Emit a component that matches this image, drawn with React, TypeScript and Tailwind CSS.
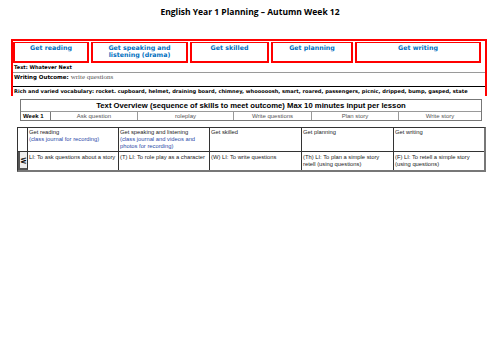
const skills = [
  { label: "Get reading", w: "w-[76px]" },
  { label: "Get speaking and listening (drama)", w: "w-[97px]" },
  { label: "Get skilled", w: "w-[79px]" },
  { label: "Get planning", w: "w-[82px]" },
  { label: "Get writing", w: "w-[126px]" },
];

const overview = [
  { text: "Ask question", w: "w-[87px]" },
  { text: "roleplay", w: "w-[96px]" },
  { text: "Write questions", w: "w-[78px]" },
  { text: "Plan story", w: "w-[87px]" },
  { text: "Write story", w: "flex-1" },
];

const plan = [
  { head: "Get reading", note: "(class journal for recording)", li: "LI: To ask questions about a story" },
  { head: "Get speaking and listening", note: "(class journal and videos and photos for recording)", li: "(T) LI: To role play as a character" },
  { head: "Get skilled", note: "", li: "(W) LI: To write questions" },
  { head: "Get planning", note: "", li: "(Th) LI: To plan a simple story retell (using questions)" },
  { head: "Get writing", note: "", li: "(F) LI: To retell a simple story (using questions)" },
];

export default function App() {
  return (
    <div className="w-[500px] h-[353px] bg-white overflow-hidden">
      {/* title */}
      <div className="pt-[7px] h-[39px]">
        <h1 className="text-center text-[8.5px] leading-[10px] font-bold text-black font-['Open_Sans',sans-serif]">
          English Year 1 Planning – Autumn Week 12
        </h1>
      </div>

      {/* skills header + text block */}
      <div className="ml-[11px] w-[476px] border-x-2 border-t-2 border-[#ff0000]">
        <div className="flex gap-[2px] pr-[4px] pt-[1px]">
          {skills.map((s) => (
            <div
              key={s.label}
              className={`${s.w} h-[21px] border-2 border-t border-[#ff0000] pt-[1px] px-[6px] text-center text-[6.3px] leading-[7px] font-bold text-[#0070c0] font-['DejaVu_Sans',sans-serif]`}
            >
              {s.label}
            </div>
          ))}
        </div>
        <div className="font-['DejaVu_Sans',sans-serif] text-black">
          <div className="h-[10px] border-b border-[#9a9a9a] px-[1px] text-[5px] leading-[9px] font-bold">
            Text: Whatever Next
          </div>
          <div className="h-[14px] border-b border-black px-[1px] text-[5.5px] leading-[9px]">
            <span className="font-bold">Writing Outcome: </span>
            <span className="text-[7px] text-[#555] font-['Liberation_Serif',serif]">write questions</span>
          </div>
          <div className="h-[9px] px-[1px] text-[5.1px] leading-[8px] font-bold whitespace-nowrap overflow-hidden">
            Rich and varied vocabulary: rocket. cupboard, helmet, draining board, chimney, whooooosh, smart, roared, passengers, picnic, dripped, bump, gasped, state
          </div>
        </div>
      </div>

      {/* overview */}
      <div className="ml-[20px] mt-[3px] w-[462px] border border-[#777] font-['Liberation_Sans',sans-serif]">
        <div className="h-[12px] border-b border-[#999] text-center text-[7.7px] leading-[12px] font-bold text-black">
          Text Overview (sequence of skills to meet outcome) Max 10 minutes input per lesson
        </div>
        <div className="flex h-[8px] text-[6px] leading-[8px] text-[#555]">
          <div className="w-[30px] border-r border-[#777] pl-[2px] font-bold text-black">Week 1</div>
          {overview.map((o, i) => (
            <div
              key={o.text}
              className={`${o.w} text-center ${i < overview.length - 1 ? "border-r border-[#999]" : ""}`}
            >
              {o.text}
            </div>
          ))}
        </div>
      </div>

      {/* plan table */}
      <div className="ml-[17px] mt-[6px] w-[469px] border-t border-l border-[#333] border-r-2 border-b-2 border-r-[#777] border-b-[#777] font-['Liberation_Sans',sans-serif] text-[5.8px] leading-[7px] text-[#222]">
        <div className="grid grid-cols-[10px_91px_91px_92px_92px_90px] h-[24px] border-b border-[#333]">
          <div className="border-r border-[#333]" />
          {plan.map((p, i) => (
            <div key={p.head} className={`px-[1px] pt-[1px] ${i < plan.length - 1 ? "border-r border-[#333]" : ""}`}>
              <div>{p.head}</div>
              {p.note && <div className="text-[#2b4aa8]">{p.note}</div>}
            </div>
          ))}
        </div>
        <div className="grid grid-cols-[10px_91px_91px_92px_92px_90px] h-[18px]">
          <div className="border-r border-[#333] bg-[#eee] border-l-2 border-b-2 border-l-[#555] border-b-[#555] flex items-center justify-center">
            <span className="rotate-90 text-[6.5px] font-bold text-black">W</span>
          </div>
          {plan.map((p, i) => (
            <div key={p.li} className={`px-[1px] pt-[2px] ${i < plan.length - 1 ? "border-r border-[#333]" : ""}`}>
              {p.li}
            </div>
          ))}
        </div>
      </div>
    </div>
  );
}
